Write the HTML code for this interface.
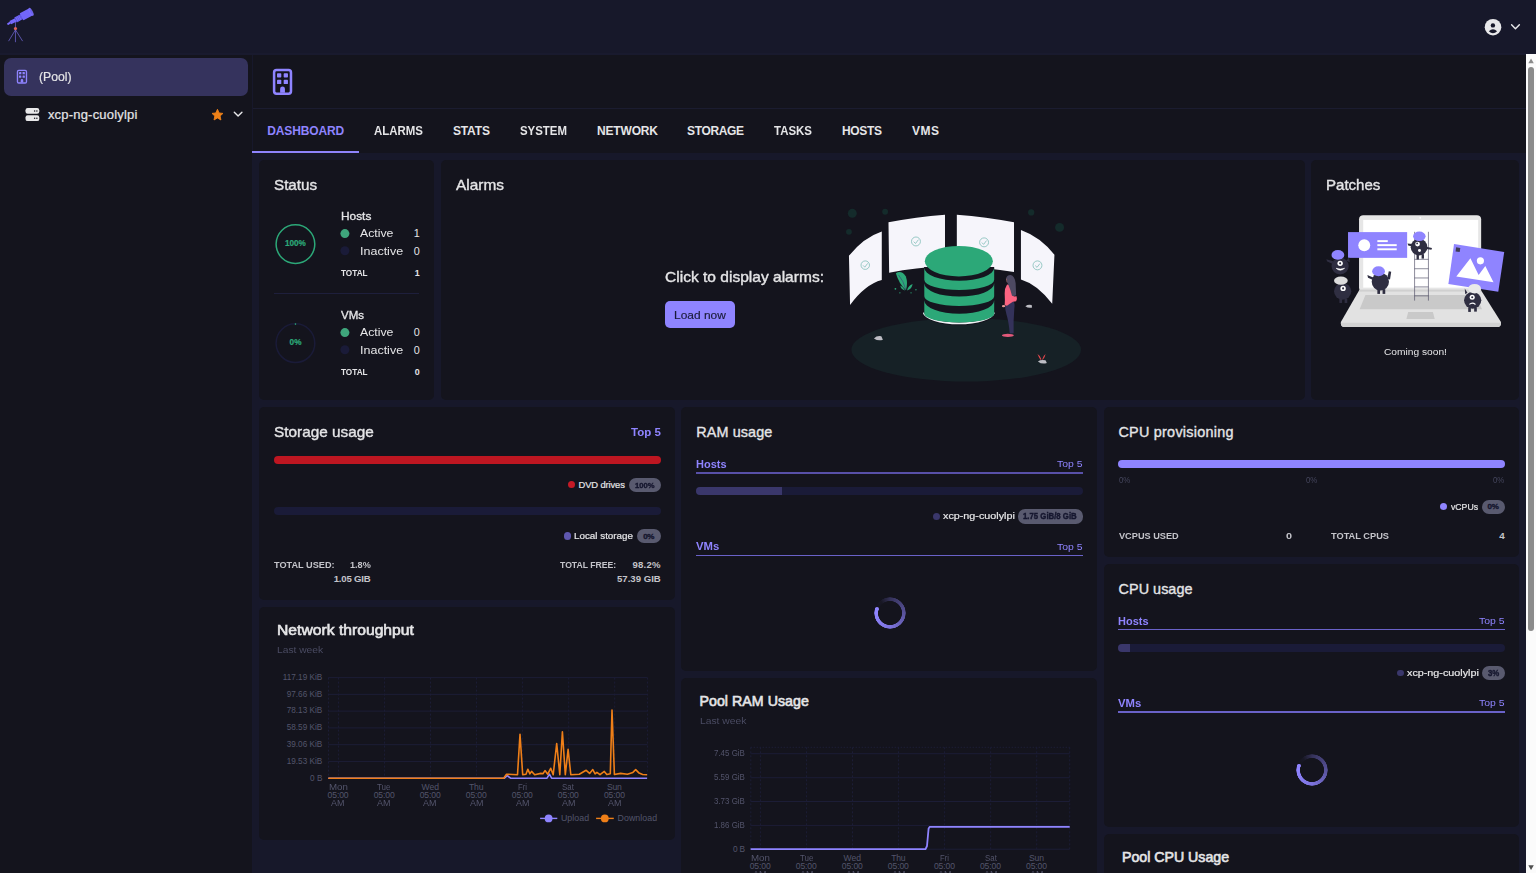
<!DOCTYPE html>
<html lang="en"><head><meta charset="utf-8"><title>XO Lite</title>
<style>
html,body{margin:0;padding:0;}
body{width:1536px;height:873px;overflow:hidden;background:#14141d;font-family:"Liberation Sans", sans-serif;position:relative;}
.b{position:absolute;}
.t{position:absolute;white-space:nowrap;margin:0;transform-origin:0 50%;}
svg{position:absolute;overflow:visible;}
.sp{position:absolute;width:32px;height:32px;border-radius:50%;background:conic-gradient(from 288deg, rgba(143,132,255,0) 0deg, rgba(143,132,255,0.04) 35deg, rgba(143,132,255,0.28) 75deg, rgba(143,132,255,0.55) 160deg, rgba(143,132,255,0.85) 250deg, rgba(143,132,255,1) 340deg, rgba(143,132,255,1) 360deg);-webkit-mask:radial-gradient(circle closest-side, transparent 11.7px, #000 12.3px, #000 15.4px, transparent 16px);mask:radial-gradient(circle closest-side, transparent 11.7px, #000 12.3px, #000 15.4px, transparent 16px);}
.sph{position:absolute;width:3.8px;height:3.8px;border-radius:50%;background:#8f84ff;}
svg text{font-family:"Liberation Sans", sans-serif;}
</style></head><body>
<div class="b" style="left:0px;top:54px;width:1536px;height:819px;background:#14141d;"></div>
<div class="b" style="left:0px;top:0px;width:1536px;height:54.8px;background:#17182a;"></div>
<div class="b" style="left:0px;top:53.2px;width:1536px;height:1.6px;background:#191a2e;"></div>
<div class="b" style="left:252px;top:54.8px;width:1.1px;height:818.2px;background:#17182b;"></div>
<div class="b" style="left:253px;top:108px;width:1273px;height:0.9px;background:#1b1c30;"></div>
<div class="b" style="left:253px;top:153.2px;width:1273px;height:719.8px;background:#17182a;"></div>
<div class="b" style="left:252px;top:150.9px;width:107px;height:2.3px;background:#8f84ff;"></div>
<div class="b" style="left:3.5px;top:57.8px;width:244.8px;height:38.0px;background:#35335d;border-radius:7px;"></div>
<svg style="left:0px;top:0px" width="128" height="73" viewBox="0 0 1531 873">
<g stroke="#7a6fe6" stroke-width="8" stroke-linecap="round" fill="none"><path d="M185 262V500M183 360L105 488M187 360L268 488"/></g>
<g transform="translate(88,290) rotate(-27.7)">
<rect x="0" y="-12" width="45" height="24" rx="6" fill="#7a6cff"/>
<rect x="40" y="-22" width="75" height="44" fill="#7468fa"/>
<rect x="110" y="-33" width="85" height="66" fill="#5f54e6"/>
<g stroke="#8f84ff" stroke-width="6"><path d="M128 -30V30M148 -30V30M168 -30V30"/></g>
<rect x="190" y="-48" width="135" height="96" rx="10" fill="#7266fa"/>
<ellipse cx="322" cy="0" rx="15" ry="50" fill="#6a5ff0" stroke="#8f84ff" stroke-width="5"/>
</g>
<circle cx="185" cy="342" r="19" fill="#e0645a"/>
</svg>

<svg style="left:262px;top:60px" width="44" height="44" viewBox="0 0 873 873">
<rect x="240" y="200" width="335" height="470" rx="48" fill="none" stroke="#8f84ff" stroke-width="50"/>
<g fill="#8f84ff"><rect x="298" y="262" width="85" height="85" rx="14"/><rect x="430" y="262" width="85" height="85" rx="14"/><rect x="298" y="393" width="85" height="85" rx="14"/><rect x="430" y="393" width="85" height="85" rx="14"/>
<path d="M360 648 V572 A47.5 47.5 0 0 1 455 572 V648Z"/></g>
</svg>
<svg style="left:11.2px;top:65.3px" width="23.5" height="23.5" viewBox="0 0 873 873">
<rect x="240" y="200" width="335" height="470" rx="48" fill="none" stroke="#8f84ff" stroke-width="50"/>
<g fill="#8f84ff"><rect x="298" y="262" width="85" height="85" rx="14"/><rect x="430" y="262" width="85" height="85" rx="14"/><rect x="298" y="393" width="85" height="85" rx="14"/><rect x="430" y="393" width="85" height="85" rx="14"/>
<path d="M360 648 V572 A47.5 47.5 0 0 1 455 572 V648Z"/></g>
</svg>
<svg style="left:25px;top:107px" width="16" height="16" viewBox="0 0 16 16">
<rect x="0.5" y="1.1" width="13.8" height="5.7" rx="2.2" fill="#e8e8ea"/>
<rect x="0.5" y="8.3" width="13.8" height="5.8" rx="2.2" fill="#e8e8ea"/>
<g fill="#14141d"><circle cx="9.6" cy="3.95" r="0.75"/><circle cx="11.9" cy="3.95" r="0.75"/><circle cx="9.6" cy="11.2" r="0.75"/><circle cx="11.9" cy="11.2" r="0.75"/></g>
</svg>
<svg style="left:204px;top:100px" width="48" height="28" viewBox="0 0 1497 873">
<path id="star" d="M420 290 L472 405 L590 418 L502 500 L527 622 L420 560 L313 622 L338 500 L250 418 L368 405Z" fill="#ee8118" stroke="#ee8118" stroke-width="28" stroke-linejoin="round"/>
<path d="M945 380 L1063 498 L1183 380" fill="none" stroke="#e8e8ea" stroke-width="44" stroke-linecap="round" stroke-linejoin="round"/>
</svg>

<span class="t " style="left:38.50px;top:69px;font-size:13px;line-height:15px;color:#e5e5e7;transform:scaleX(0.9372);-webkit-text-stroke:0.2px #e5e5e7;">(Pool)</span>
<span class="t " style="left:47.90px;top:107px;font-size:13px;line-height:15px;color:#e5e5e7;letter-spacing:0.200px;-webkit-text-stroke:0.2px #e5e5e7;">xcp-ng-cuolylpi</span>
<svg style="left:1476px;top:12px" width="54" height="30" viewBox="0 0 1536 853">
<circle cx="484" cy="433" r="236" fill="#e8e8ea"/>
<circle cx="481" cy="382" r="62" fill="#17182a"/>
<path d="M365 548 Q483 435 600 548 Q483 660 365 548Z" fill="#17182a"/>
<path d="M1012 362 L1122 478 L1234 362" fill="none" stroke="#e8e8ea" stroke-width="40" stroke-linecap="round" stroke-linejoin="round"/>
</svg>

<span class="t " style="left:267.30px;top:124px;font-size:12px;line-height:14px;color:#8f84ff;letter-spacing:-0.150px;font-weight:700;">DASHBOARD</span>
<span class="t " style="left:374.30px;top:124px;font-size:12px;line-height:14px;color:#e5e5e7;transform:scaleX(0.9527);font-weight:700;">ALARMS</span>
<span class="t " style="left:452.90px;top:124px;font-size:12px;line-height:14px;color:#e5e5e7;letter-spacing:-0.113px;font-weight:700;">STATS</span>
<span class="t " style="left:520.00px;top:124px;font-size:12px;line-height:14px;color:#e5e5e7;transform:scaleX(0.9525);font-weight:700;">SYSTEM</span>
<span class="t " style="left:597.00px;top:124px;font-size:12px;line-height:14px;color:#e5e5e7;letter-spacing:-0.165px;font-weight:700;">NETWORK</span>
<span class="t " style="left:687.00px;top:124px;font-size:12px;line-height:14px;color:#e5e5e7;letter-spacing:-0.354px;font-weight:700;">STORAGE</span>
<span class="t " style="left:774.00px;top:124px;font-size:12px;line-height:14px;color:#e5e5e7;transform:scaleX(0.9553);font-weight:700;">TASKS</span>
<span class="t " style="left:842.00px;top:124px;font-size:12px;line-height:14px;color:#e5e5e7;letter-spacing:-0.334px;font-weight:700;">HOSTS</span>
<span class="t " style="left:912.00px;top:124px;font-size:12px;line-height:14px;color:#e5e5e7;letter-spacing:0.498px;font-weight:700;">VMS</span>
<div class="b" style="left:259.3px;top:160.2px;width:175.0px;height:240.0px;background:#14141d;border-radius:5px;"></div>
<div class="b" style="left:440.9px;top:160.2px;width:863.7px;height:240.0px;background:#14141d;border-radius:5px;"></div>
<div class="b" style="left:1311.3px;top:160.2px;width:207.3px;height:240.0px;background:#14141d;border-radius:5px;"></div>
<div class="b" style="left:259.3px;top:407.3px;width:415.9px;height:192.9px;background:#14141d;border-radius:5px;"></div>
<div class="b" style="left:681.2px;top:407.3px;width:416.1px;height:263.5px;background:#14141d;border-radius:5px;"></div>
<div class="b" style="left:1104.3px;top:407.3px;width:414.3px;height:150.1px;background:#14141d;border-radius:5px;"></div>
<div class="b" style="left:259.3px;top:606.8px;width:415.9px;height:233.2px;background:#14141d;border-radius:5px;"></div>
<div class="b" style="left:681.2px;top:678px;width:416.1px;height:205px;background:#14141d;border-radius:5px;"></div>
<div class="b" style="left:1104.3px;top:564.3px;width:414.3px;height:262.7px;background:#14141d;border-radius:5px;"></div>
<div class="b" style="left:1104.3px;top:834.2px;width:414.3px;height:48.8px;background:#14141d;border-radius:5px;"></div>
<span class="t " style="left:273.80px;top:177px;font-size:14.4px;line-height:16px;color:#e5e5e7;transform:scaleX(1.0558);-webkit-text-stroke:0.35px #e5e5e7;">Status</span>
<svg style="left:265px;top:215px" width="60" height="160" viewBox="0 0 60 160">
<circle cx="30.45" cy="29.1" r="19.35" fill="none" stroke="#2ca878" stroke-width="1.5"/>
<circle cx="30.45" cy="128.2" r="19.35" fill="none" stroke="#1a1b38" stroke-width="1.5"/>
<circle cx="30.45" cy="109.1" r="0.8" fill="#2ca878"/>
</svg>
<svg style="left:330px;top:220px" width="30" height="150" viewBox="0 0 30 150">
<circle cx="14.9" cy="13.6" r="4.5" fill="#3fa67c"/>
<circle cx="14.9" cy="30.7" r="4.5" fill="#1a1b38"/>
<circle cx="14.9" cy="112.6" r="4.5" fill="#3fa67c"/>
<circle cx="14.9" cy="129.7" r="4.5" fill="#1a1b38"/>
</svg>

<span class="t " style="left:284.90px;top:239px;font-size:8.2px;line-height:9px;color:#2ca878;font-weight:700;-webkit-text-stroke:0.2px #2ca878;">100%</span>
<span class="t " style="left:289.40px;top:338px;font-size:8.2px;line-height:9px;color:#2ca878;letter-spacing:0.276px;font-weight:700;-webkit-text-stroke:0.2px #2ca878;">0%</span>
<span class="t " style="left:340.70px;top:210px;font-size:10.8px;line-height:12px;color:#e5e5e7;transform:scaleX(1.0990);-webkit-text-stroke:0.3px #e5e5e7;">Hosts</span>
<span class="t " style="left:359.90px;top:227px;font-size:10.8px;line-height:12px;color:#e5e5e7;transform:scaleX(1.1375);">Active</span>
<span class="t " style="left:359.90px;top:245px;font-size:10.8px;line-height:12px;color:#e5e5e7;transform:scaleX(1.1579);">Inactive</span>
<span class="t " style="left:413.82px;top:227px;font-size:10.8px;line-height:12px;color:#e5e5e7;">1</span>
<span class="t " style="left:413.82px;top:245px;font-size:10.8px;line-height:12px;color:#e5e5e7;">0</span>
<span class="t " style="left:341.00px;top:268px;font-size:8.9px;line-height:10px;color:#e5e5e7;transform:scaleX(0.9259);font-weight:700;">TOTAL</span>
<span class="t " style="left:414.79px;top:268px;font-size:8.9px;line-height:10px;color:#e5e5e7;font-weight:700;">1</span>
<span class="t " style="left:340.70px;top:309px;font-size:10.8px;line-height:12px;color:#e5e5e7;transform:scaleX(1.0651);-webkit-text-stroke:0.3px #e5e5e7;">VMs</span>
<span class="t " style="left:359.90px;top:326px;font-size:10.8px;line-height:12px;color:#e5e5e7;transform:scaleX(1.1375);">Active</span>
<span class="t " style="left:359.90px;top:344px;font-size:10.8px;line-height:12px;color:#e5e5e7;transform:scaleX(1.1579);">Inactive</span>
<span class="t " style="left:413.82px;top:326px;font-size:10.8px;line-height:12px;color:#e5e5e7;">0</span>
<span class="t " style="left:413.82px;top:344px;font-size:10.8px;line-height:12px;color:#e5e5e7;">0</span>
<span class="t " style="left:341.00px;top:367px;font-size:8.9px;line-height:10px;color:#e5e5e7;transform:scaleX(0.9259);font-weight:700;">TOTAL</span>
<span class="t " style="left:414.79px;top:367px;font-size:8.9px;line-height:10px;color:#e5e5e7;font-weight:700;">0</span>
<div class="b" style="left:273.7px;top:293px;width:145.8px;height:1px;background:#1e1f3c;"></div>
<span class="t " style="left:456.00px;top:177px;font-size:14.4px;line-height:16px;color:#e5e5e7;transform:scaleX(1.0706);-webkit-text-stroke:0.35px #e5e5e7;">Alarms</span>
<span class="t " style="left:665.00px;top:269px;font-size:14.4px;line-height:16px;color:#e5e5e7;transform:scaleX(1.0805);-webkit-text-stroke:0.35px #e5e5e7;">Click to display alarms:</span>
<div class="b" style="left:664.6px;top:300.8px;width:70.6px;height:27.4px;background:#8f84ff;border-radius:5px;"></div>
<span class="t " style="left:674.00px;top:309px;font-size:11.2px;line-height:12px;color:#1a1b38;transform:scaleX(1.0678);-webkit-text-stroke:0.15px #1a1b38;">Load now</span>
<svg style="left:840px;top:195px" width="256" height="195" viewBox="0 0 1146 873">
<g fill="#142b2b"><circle cx="55" cy="82" r="20"/><circle cx="202" cy="75" r="13"/><circle cx="40" cy="165" r="13"/><circle cx="856" cy="78" r="14"/><circle cx="983" cy="145" r="20"/></g>
<ellipse cx="565" cy="693" rx="514" ry="142" fill="#162126"/>
<g fill="#f6f5fb">
<path d="M40 272 Q105 190 187 163 L187 380 Q112 400 45 492Z"/>
<path d="M217 122 Q340 98 470 88 L470 318 Q340 325 220 348Z"/>
<path d="M523 88 Q655 98 779 122 L779 345 Q655 325 523 318Z"/>
<path d="M810 157 Q897 188 960 268 L950 487 Q884 400 810 378Z"/>
</g>
<g fill="none" stroke="#7dbcb6" stroke-width="3.5">
<circle cx="113" cy="314" r="19"/><path d="M103 315 l8 8 l13 -17"/>
<circle cx="340" cy="208" r="20"/><path d="M330 209 l8 8 l13 -17"/>
<circle cx="645" cy="212" r="20"/><path d="M635 213 l8 8 l13 -17"/>
<circle cx="884" cy="315" r="20"/><path d="M874 316 l8 8 l13 -17"/>
</g>
<!-- cylinder -->
<g transform="translate(335.8,201.5) scale(0.4615)">
<path d="M88 262 L88 715 A339 112 0 0 0 768 715 L768 262Z" fill="#15151f"/>
<path d="M76 708 A350 118 0 0 0 774 708 L768 700 A339 100 0 0 1 88 700Z" fill="#f0f0f4"/>
<g fill="#2ca878">
<path d="M90 270 A339 125 0 0 0 768 270 L768 385 A339 100 0 0 1 90 385Z"/>
<path d="M90 420 A339 128 0 0 0 768 420 L768 545 A339 95 0 0 1 90 545Z"/>
<path d="M90 585 A339 130 0 0 0 768 585 L768 715 A339 85 0 0 1 90 715Z"/>
<ellipse cx="425" cy="205" rx="330" ry="148"/>
</g>
</g>
<!-- plant -->
<path d="M250 350 Q275 335 295 365 Q305 395 295 425 Q265 400 250 350Z" fill="#2ca878"/>
<path d="M300 428 Q305 405 325 398 Q322 420 300 428Z" fill="#2ca878"/>
<path d="M292 428 Q280 410 270 405 Q272 422 292 428Z" fill="#2ca878"/>
<path d="M262 358 Q285 385 295 425" stroke="#3b4a78" stroke-width="3" fill="none"/>
<g fill="#2ca878"><circle cx="248" cy="420" r="4"/><circle cx="268" cy="438" r="3"/><circle cx="318" cy="438" r="3"/><circle cx="340" cy="424" r="3"/></g>
<!-- woman -->
<g transform="translate(671.55,313.4) scale(0.41)">
<path d="M165 450 Q200 420 255 395 Q275 420 265 480 Q255 600 258 745 L215 748 Q205 620 180 540 Q165 490 165 450Z" fill="#34325a"/>
<path d="M185 215 Q215 205 235 260 Q245 310 260 345 L290 340 Q300 365 285 395 L250 400 Q215 420 185 445 L160 440 Q165 380 160 310 Q160 250 185 215Z" fill="#fb6381"/>
<path d="M175 150 L190 135 L198 190 L182 188Z" fill="#9a6a6a"/>
<path d="M175 150 Q180 110 225 108 Q270 115 280 200 L285 330 Q265 345 240 335 Q225 270 200 215 Q182 190 185 150Z" fill="#4d4962"/>
<ellipse cx="148" cy="450" rx="18" ry="12" fill="#e79a96"/>
<ellipse cx="195" cy="768" rx="65" ry="18" fill="#e2597a"/>
</g>
<!-- rocks -->
<path d="M152 642 Q165 628 185 632 L192 648 Q170 655 152 642Z" fill="#bdbdc4"/>
<path d="M830 498 Q842 488 858 493 L860 504 Q842 508 830 498Z" fill="#bdbdc4"/>
<path d="M886 745 Q900 735 920 740 L926 752 Q904 760 886 745Z" fill="#bdbdc4"/>
<path d="M897 738 Q888 722 884 712 Q898 720 902 736Z M905 736 Q910 720 920 712 Q918 728 908 738Z" fill="#e5484d"/>
</svg>

<span class="t " style="left:1326.20px;top:177px;font-size:14.4px;line-height:16px;color:#e5e5e7;transform:scaleX(1.0459);-webkit-text-stroke:0.35px #e5e5e7;">Patches</span>
<svg style="left:1320px;top:205px" width="192" height="130" viewBox="0 0 1289 873">
<path d="M262 575 L1082 575 L1215 785 Q1220 820 1185 820 L170 820 Q135 820 140 785Z" fill="#e2e2e2"/>
<path d="M140 790 L1215 790 Q1218 820 1185 820 L170 820 Q137 820 140 790Z" fill="#d2d2d2"/>
<rect x="262" y="68" width="820" height="515" rx="28" fill="#e6e6e6"/>
<rect x="290" y="100" width="772" height="455" fill="#ffffff"/>
<rect x="262" y="568" width="820" height="14" fill="#d0d0d0"/>
<circle cx="673" cy="86" r="6" fill="#fff"/>
<path d="M305 605 L1045 605 L1088 700 L266 700Z" fill="#c9c9c9"/>
<path d="M592 718 L758 718 L770 765 L580 765Z" fill="#c9c9c9"/>
<!-- left card -->
<rect x="188" y="182" width="397" height="173" fill="#8f84ff"/>
<circle cx="297" cy="270" r="40" fill="#fff"/>
<g fill="#fff"><rect x="385" y="236" width="70" height="13"/><rect x="385" y="263" width="130" height="13"/><rect x="385" y="291" width="130" height="13"/></g>
<!-- ladder -->
<g stroke="#3f3d56" stroke-width="4" fill="none"><path d="M635 180V642M728 180V642M635 365H728M635 428H728M635 490H728M635 550H728M635 610H728"/></g>
<!-- monster on ladder -->
<g fill="#2f2e41"><ellipse cx="665" cy="283" rx="56" ry="56"/><path d="M588 258 L620 262 L620 278 L592 272Z"/><path d="M712 280 L752 288 L748 300 L712 296Z"/><rect x="648" y="330" width="16" height="36"/><rect x="682" y="330" width="16" height="30"/></g>
<ellipse cx="667" cy="210" rx="42" ry="32" fill="#8f84ff"/>
<circle cx="655" cy="262" r="16" fill="#fff"/><circle cx="652" cy="258" r="6" fill="#2f2e41"/><circle cx="668" cy="306" r="10" fill="#fff"/>
<!-- monster middle -->
<g fill="#2f2e41"><ellipse cx="405" cy="515" rx="58" ry="60"/><path d="M318 470 L365 490 L360 505 L322 488Z"/><path d="M450 495 L462 445 L478 448 L470 500Z"/><rect x="385" y="565" width="18" height="32"/><rect x="420" y="565" width="18" height="32"/></g>
<ellipse cx="393" cy="445" rx="43" ry="34" fill="#8f84ff"/>
<!-- right card -->
<path d="M900 262 L1237 315 L1197 583 L862 530Z" fill="#8f84ff"/>
<path d="M914 284 L942 288 L938 316 L910 312Z" fill="#3f3d56"/>
<path d="M915 480 L1010 358 L1065 470 L1110 410 L1165 518Z" fill="#fff"/>
<circle cx="1077" cy="375" r="24" fill="#fff"/>
<!-- monsters left -->
<g fill="#2f2e41"><ellipse cx="152" cy="580" rx="58" ry="56"/><rect x="130" y="628" width="18" height="30"/><rect x="165" y="628" width="18" height="30"/><ellipse cx="135" cy="410" rx="58" ry="56"/><path d="M42 365 L88 378 L82 395 L48 380Z"/><path d="M178 375 L195 350 L200 385Z"/></g>
<ellipse cx="140" cy="508" rx="46" ry="28" fill="#dcdcdc"/>
<ellipse cx="120" cy="335" rx="43" ry="33" fill="#8f84ff"/>
<circle cx="135" cy="392" r="18" fill="#fff"/><circle cx="135" cy="392" r="7" fill="#2f2e41"/>
<path d="M108 425 Q135 450 165 425 Q135 436 108 425Z" fill="#fff" stroke="#fff" stroke-width="4"/>
<circle cx="155" cy="560" r="18" fill="#fff"/><circle cx="155" cy="560" r="7" fill="#2f2e41"/>
<!-- monster right -->
<g fill="#2f2e41"><ellipse cx="1025" cy="640" rx="58" ry="56"/><rect x="995" y="688" width="18" height="30"/><rect x="1035" y="688" width="18" height="28"/><path d="M972 560 L990 590 L975 600Z"/></g>
<ellipse cx="1038" cy="562" rx="43" ry="32" fill="#e9e9e9"/>
<circle cx="1022" cy="620" r="17" fill="#fff"/><circle cx="1022" cy="620" r="7" fill="#2f2e41"/>
<path d="M1003 668 Q1022 650 1044 668" stroke="#fff" stroke-width="7" fill="none"/>
</svg>

<span class="t " style="left:1384.30px;top:346px;font-size:9.6px;line-height:11px;color:#e5e5e7;transform:scaleX(1.0629);">Coming soon!</span>
<span class="t " style="left:273.70px;top:424px;font-size:14.4px;line-height:16px;color:#e5e5e7;transform:scaleX(1.0666);-webkit-text-stroke:0.35px #e5e5e7;">Storage usage</span>
<span class="t " style="left:630.70px;top:426px;font-size:10.8px;line-height:12px;color:#8f84ff;transform:scaleX(1.0658);font-weight:700;">Top 5</span>
<div class="b" style="left:273.5px;top:455.6px;width:387.25px;height:8.0px;background:#be1621;border-radius:4px;"></div>
<div class="b" style="left:568.2px;top:481.2px;width:7.3px;height:7.3px;background:#c41a26;border-radius:4px;"></div>
<span class="t " style="left:578.50px;top:479px;font-size:9.4px;line-height:11px;color:#e5e5e7;letter-spacing:-0.115px;-webkit-text-stroke:0.2px #e5e5e7;">DVD drives</span>
<div class="b" style="left:629.1px;top:478px;width:31.65px;height:14px;background:#595a6f;border-radius:7px;"></div>
<span class="t " style="left:634.90px;top:481px;font-size:8px;line-height:9px;color:#16172f;transform:scaleX(0.9530);font-weight:700;-webkit-text-stroke:0.4px #16172f;">100%</span>
<div class="b" style="left:273.7px;top:506.9px;width:387.05px;height:8.0px;background:#1a1b38;border-radius:4px;"></div>
<div class="b" style="left:564.1px;top:532.4px;width:7.3px;height:7.3px;background:#5f58b0;border-radius:4px;"></div>
<span class="t " style="left:574.10px;top:530px;font-size:9.4px;line-height:11px;color:#e5e5e7;transform:scaleX(1.0484);-webkit-text-stroke:0.2px #e5e5e7;">Local storage</span>
<div class="b" style="left:637.4px;top:528.9px;width:23.35px;height:14.0px;background:#595a6f;border-radius:7px;"></div>
<span class="t " style="left:643.20px;top:532px;font-size:8px;line-height:9px;color:#16172f;letter-spacing:-0.363px;font-weight:700;-webkit-text-stroke:0.4px #16172f;">0%</span>
<span class="t " style="left:273.70px;top:559px;font-size:9.6px;line-height:11px;color:#c4c4ca;transform:scaleX(0.9553);font-weight:700;">TOTAL USED:</span>
<span class="t " style="left:349.70px;top:559px;font-size:9.6px;line-height:11px;color:#c4c4ca;transform:scaleX(0.9514);font-weight:700;">1.8%</span>
<span class="t " style="left:333.70px;top:573px;font-size:9.6px;line-height:11px;color:#c4c4ca;letter-spacing:-0.203px;font-weight:700;">1.05 GIB</span>
<span class="t " style="left:560.40px;top:559px;font-size:9.6px;line-height:11px;color:#c4c4ca;transform:scaleX(0.9020);font-weight:700;">TOTAL FREE:</span>
<span class="t " style="left:632.40px;top:559px;font-size:9.6px;line-height:11px;color:#c4c4ca;letter-spacing:0.241px;font-weight:700;">98.2%</span>
<span class="t " style="left:617.00px;top:573px;font-size:9.6px;line-height:11px;color:#c4c4ca;font-weight:700;">57.39 GIB</span>
<span class="t " style="left:277.30px;top:622px;font-size:14.2px;line-height:16px;color:#e5e5e7;transform:scaleX(1.1056);-webkit-text-stroke:0.6px #e5e5e7;">Network throughput</span>
<span class="t " style="left:277.30px;top:644px;font-size:9.6px;line-height:11px;color:#4a4b62;transform:scaleX(1.0684);">Last week</span>
<svg style="left:0;top:0" width="1536" height="873" viewBox="0 0 1536 873"><g stroke="#1c1d36" stroke-width="1" fill="none"><path d="M328.3 677.6H647.4"/><path d="M328.3 694.37H647.4"/><path d="M328.3 711.14H647.4"/><path d="M328.3 727.9100000000001H647.4"/><path d="M328.3 744.6800000000001H647.4"/><path d="M328.3 761.45H647.4"/><path d="M328.3 778.22H647.4"/><path d="M328.5 677.6V778.22" stroke-dasharray="2 2"/><path d="M338.4 677.6V778.22" stroke-dasharray="2 2"/><path d="M384.45 677.6V778.22" stroke-dasharray="2 2"/><path d="M430.5 677.6V778.22" stroke-dasharray="2 2"/><path d="M476.54999999999995 677.6V778.22" stroke-dasharray="2 2"/><path d="M522.5999999999999 677.6V778.22" stroke-dasharray="2 2"/><path d="M568.65 677.6V778.22" stroke-dasharray="2 2"/><path d="M614.6999999999999 677.6V778.22" stroke-dasharray="2 2"/><path d="M647.4 677.6V778.22" stroke-dasharray="2 2"/></g><path d="M328.3 778.2H490" stroke="#8f84ff" stroke-width="1.6" fill="none"/><path d="M490.0 778.2 L504.4 778.2 L507.2 775.6 L510.6 778.2 L547.0 778.2 L549.4 774.2 L551.6 778.2 L647.1 778.2" stroke="#8f84ff" stroke-width="1.6" fill="none" stroke-linejoin="round"/><path d="M328.3 778.2H490" stroke="#ef7f18" stroke-width="1.6" fill="none"/><path d="M490.0 778.2 L503.7 778.2 L506.5 774.2 L517.5 774.7 L520.0 734.3 L522.7 774.7 L526.0 774.2 L527.8 769.2 L529.9 773.8 L531.6 771.4 L534.7 774.7 L540.9 773.4 L542.9 773.8 L545.0 770.6 L547.7 774.2 L550.7 768.3 L553.2 774.7 L556.7 743.5 L559.8 774.7 L562.4 731.8 L565.3 774.7 L568.1 749.4 L570.8 774.7 L579.3 774.2 L584.8 771.0 L586.2 770.3 L589.6 773.4 L592.8 769.6 L595.1 773.8 L596.9 772.4 L600.0 774.7 L604.3 771.4 L606.8 774.5 L610.3 773.8 L612.0 710.1 L614.4 774.5 L620.6 773.4 L627.4 774.2 L632.9 772.4 L635.7 769.6 L639.1 773.1 L642.6 774.5 L647.1 774.7" stroke="#ef7f18" stroke-width="1.6" fill="none" stroke-linejoin="round"/><path d="M540.1 818.4H557.3" stroke="#8f84ff" stroke-width="1.4"/><circle cx="548.6" cy="818.4" r="3.9" fill="#8f84ff"/><path d="M596.1 818.4H613.8" stroke="#ef7f18" stroke-width="1.4"/><circle cx="604.8" cy="818.4" r="3.9" fill="#ef7f18"/></svg>
<span class="t " style="left:282.75px;top:673px;font-size:8.2px;line-height:9px;color:#53546b;">117.19 KiB</span>
<span class="t " style="left:286.72px;top:690px;font-size:8.2px;line-height:9px;color:#53546b;">97.66 KiB</span>
<span class="t " style="left:286.72px;top:706px;font-size:8.2px;line-height:9px;color:#53546b;">78.13 KiB</span>
<span class="t " style="left:286.72px;top:723px;font-size:8.2px;line-height:9px;color:#53546b;">58.59 KiB</span>
<span class="t " style="left:286.72px;top:740px;font-size:8.2px;line-height:9px;color:#53546b;">39.06 KiB</span>
<span class="t " style="left:286.72px;top:757px;font-size:8.2px;line-height:9px;color:#53546b;">19.53 KiB</span>
<span class="t " style="left:310.12px;top:774px;font-size:8.2px;line-height:9px;color:#53546b;">0 B</span>
<span class="t " style="left:328.65px;top:782px;font-size:8.6px;line-height:10px;color:#53546b;transform:scaleX(1.1309);">Mon</span>
<span class="t " style="left:327.60px;top:790px;font-size:8.6px;line-height:10px;color:#53546b;letter-spacing:-0.118px;">05:00</span>
<span class="t " style="left:331.35px;top:798px;font-size:8.6px;line-height:10px;color:#53546b;transform:scaleX(1.0431);">AM</span>
<span class="t " style="left:377.40px;top:782px;font-size:8.6px;line-height:10px;color:#53546b;transform:scaleX(0.9280);">Tue</span>
<span class="t " style="left:373.65px;top:790px;font-size:8.6px;line-height:10px;color:#53546b;letter-spacing:-0.118px;">05:00</span>
<span class="t " style="left:377.40px;top:798px;font-size:8.6px;line-height:10px;color:#53546b;transform:scaleX(1.0431);">AM</span>
<span class="t " style="left:421.45px;top:782px;font-size:8.6px;line-height:10px;color:#53546b;letter-spacing:-0.012px;">Wed</span>
<span class="t " style="left:419.70px;top:790px;font-size:8.6px;line-height:10px;color:#53546b;letter-spacing:-0.118px;">05:00</span>
<span class="t " style="left:423.45px;top:798px;font-size:8.6px;line-height:10px;color:#53546b;transform:scaleX(1.0431);">AM</span>
<span class="t " style="left:469.05px;top:782px;font-size:8.6px;line-height:10px;color:#53546b;letter-spacing:-0.223px;">Thu</span>
<span class="t " style="left:465.75px;top:790px;font-size:8.6px;line-height:10px;color:#53546b;letter-spacing:-0.118px;">05:00</span>
<span class="t " style="left:469.50px;top:798px;font-size:8.6px;line-height:10px;color:#53546b;transform:scaleX(1.0431);">AM</span>
<span class="t " style="left:517.75px;top:782px;font-size:8.6px;line-height:10px;color:#53546b;transform:scaleX(0.8980);">Fri</span>
<span class="t " style="left:511.80px;top:790px;font-size:8.6px;line-height:10px;color:#53546b;letter-spacing:-0.118px;">05:00</span>
<span class="t " style="left:515.55px;top:798px;font-size:8.6px;line-height:10px;color:#53546b;transform:scaleX(1.0431);">AM</span>
<span class="t " style="left:562.40px;top:782px;font-size:8.6px;line-height:10px;color:#53546b;transform:scaleX(0.9171);">Sat</span>
<span class="t " style="left:557.85px;top:790px;font-size:8.6px;line-height:10px;color:#53546b;letter-spacing:-0.118px;">05:00</span>
<span class="t " style="left:561.60px;top:798px;font-size:8.6px;line-height:10px;color:#53546b;transform:scaleX(1.0431);">AM</span>
<span class="t " style="left:606.95px;top:782px;font-size:8.6px;line-height:10px;color:#53546b;letter-spacing:-0.212px;">Sun</span>
<span class="t " style="left:603.90px;top:790px;font-size:8.6px;line-height:10px;color:#53546b;letter-spacing:-0.118px;">05:00</span>
<span class="t " style="left:607.65px;top:798px;font-size:8.6px;line-height:10px;color:#53546b;transform:scaleX(1.0431);">AM</span>
<span class="t " style="left:560.90px;top:813px;font-size:8.8px;line-height:10px;color:#53546b;letter-spacing:0.054px;">Upload</span>
<span class="t " style="left:617.50px;top:813px;font-size:8.8px;line-height:10px;color:#53546b;letter-spacing:0.069px;">Download</span>
<svg style="left:0;top:0" width="1536" height="873" viewBox="0 0 1536 873"><g stroke="#1c1d36" stroke-width="1" fill="none"><path d="M750.6 753.7H1069.7"/><path d="M750.6 777.7H1069.7"/><path d="M750.6 801.5H1069.7"/><path d="M750.6 825.4H1069.7"/><path d="M750.6 849.2H1069.7"/><path d="M750.6 747.3H1069.7" stroke-dasharray="1.5 1.5"/><path d="M750.8 747.3V849.2" stroke-dasharray="2 2"/><path d="M760.4 747.3V849.2" stroke-dasharray="2 2"/><path d="M806.4499999999999 747.3V849.2" stroke-dasharray="2 2"/><path d="M852.5 747.3V849.2" stroke-dasharray="2 2"/><path d="M898.55 747.3V849.2" stroke-dasharray="2 2"/><path d="M944.5999999999999 747.3V849.2" stroke-dasharray="2 2"/><path d="M990.65 747.3V849.2" stroke-dasharray="2 2"/><path d="M1036.6999999999998 747.3V849.2" stroke-dasharray="2 2"/><path d="M1069.7 747.3V849.2" stroke-dasharray="2 2"/></g><path d="M750.6 849.2H925.5L927 846L928.6 828.5L929.8 826.8H1069.7" stroke="#8f84ff" stroke-width="1.8" fill="none" stroke-linejoin="round"/></svg>
<span class="t " style="left:714.30px;top:748px;font-size:8.3px;line-height:10px;color:#53546b;transform:scaleX(0.9564);">7.45 GiB</span>
<span class="t " style="left:714.30px;top:772px;font-size:8.3px;line-height:10px;color:#53546b;transform:scaleX(0.9564);">5.59 GiB</span>
<span class="t " style="left:714.30px;top:796px;font-size:8.3px;line-height:10px;color:#53546b;transform:scaleX(0.9564);">3.73 GiB</span>
<span class="t " style="left:714.30px;top:820px;font-size:8.3px;line-height:10px;color:#53546b;transform:scaleX(0.9564);">1.86 GiB</span>
<span class="t " style="left:733.02px;top:844px;font-size:8.3px;line-height:10px;color:#53546b;letter-spacing:-0.200px;">0 B</span>
<span class="t " style="left:750.75px;top:853px;font-size:8.6px;line-height:10px;color:#53546b;transform:scaleX(1.1309);">Mon</span>
<span class="t " style="left:749.70px;top:861px;font-size:8.6px;line-height:10px;color:#53546b;letter-spacing:-0.118px;">05:00</span>
<span class="t " style="left:753.45px;top:869px;font-size:8.6px;line-height:10px;color:#53546b;transform:scaleX(1.0431);">AM</span>
<span class="t " style="left:799.50px;top:853px;font-size:8.6px;line-height:10px;color:#53546b;transform:scaleX(0.9280);">Tue</span>
<span class="t " style="left:795.75px;top:861px;font-size:8.6px;line-height:10px;color:#53546b;letter-spacing:-0.118px;">05:00</span>
<span class="t " style="left:799.50px;top:869px;font-size:8.6px;line-height:10px;color:#53546b;transform:scaleX(1.0431);">AM</span>
<span class="t " style="left:843.55px;top:853px;font-size:8.6px;line-height:10px;color:#53546b;letter-spacing:-0.012px;">Wed</span>
<span class="t " style="left:841.80px;top:861px;font-size:8.6px;line-height:10px;color:#53546b;letter-spacing:-0.118px;">05:00</span>
<span class="t " style="left:845.55px;top:869px;font-size:8.6px;line-height:10px;color:#53546b;transform:scaleX(1.0431);">AM</span>
<span class="t " style="left:891.15px;top:853px;font-size:8.6px;line-height:10px;color:#53546b;letter-spacing:-0.223px;">Thu</span>
<span class="t " style="left:887.85px;top:861px;font-size:8.6px;line-height:10px;color:#53546b;letter-spacing:-0.118px;">05:00</span>
<span class="t " style="left:891.60px;top:869px;font-size:8.6px;line-height:10px;color:#53546b;transform:scaleX(1.0431);">AM</span>
<span class="t " style="left:939.85px;top:853px;font-size:8.6px;line-height:10px;color:#53546b;transform:scaleX(0.8980);">Fri</span>
<span class="t " style="left:933.90px;top:861px;font-size:8.6px;line-height:10px;color:#53546b;letter-spacing:-0.118px;">05:00</span>
<span class="t " style="left:937.65px;top:869px;font-size:8.6px;line-height:10px;color:#53546b;transform:scaleX(1.0431);">AM</span>
<span class="t " style="left:984.50px;top:853px;font-size:8.6px;line-height:10px;color:#53546b;transform:scaleX(0.9171);">Sat</span>
<span class="t " style="left:979.95px;top:861px;font-size:8.6px;line-height:10px;color:#53546b;letter-spacing:-0.118px;">05:00</span>
<span class="t " style="left:983.70px;top:869px;font-size:8.6px;line-height:10px;color:#53546b;transform:scaleX(1.0431);">AM</span>
<span class="t " style="left:1029.05px;top:853px;font-size:8.6px;line-height:10px;color:#53546b;letter-spacing:-0.212px;">Sun</span>
<span class="t " style="left:1026.00px;top:861px;font-size:8.6px;line-height:10px;color:#53546b;letter-spacing:-0.118px;">05:00</span>
<span class="t " style="left:1029.75px;top:869px;font-size:8.6px;line-height:10px;color:#53546b;transform:scaleX(1.0431);">AM</span>
<span class="t " style="left:696.20px;top:424px;font-size:14.4px;line-height:16px;color:#e5e5e7;letter-spacing:0.118px;-webkit-text-stroke:0.35px #e5e5e7;">RAM usage</span>
<span class="t " style="left:696.20px;top:459px;font-size:10.4px;line-height:11px;color:#8f84ff;transform:scaleX(1.0592);font-weight:700;">Hosts</span>
<span class="t " style="left:1057.30px;top:458px;font-size:9.8px;line-height:11px;color:#8f84ff;transform:scaleX(1.0649);">Top 5</span>
<div class="b" style="left:696px;top:472.3px;width:387px;height:1.4px;background:#5850a8;"></div>
<div class="b" style="left:696px;top:487.1px;width:387px;height:7.8px;background:#1a1b38;border-radius:4px;"></div>
<div class="b" style="left:696px;top:487.1px;width:85.5px;height:7.8px;background:#3a376b;border-radius:4px 0 0 4px;"></div>
<div class="b" style="left:932.9px;top:512.9px;width:6.9px;height:6.9px;background:#3a376b;border-radius:4px;"></div>
<span class="t " style="left:943.10px;top:510px;font-size:9.6px;line-height:11px;color:#e5e5e7;transform:scaleX(1.1222);-webkit-text-stroke:0.2px #e5e5e7;">xcp-ng-cuolylpi</span>
<div class="b" style="left:1017.5px;top:509.4px;width:65.5px;height:14.2px;background:#595a6f;border-radius:7.1px;"></div>
<span class="t " style="left:1023.40px;top:512px;font-size:8.2px;line-height:9px;color:#16172f;transform:scaleX(0.9515);font-weight:700;-webkit-text-stroke:0.4px #16172f;">1.75 GiB/8 GiB</span>
<span class="t " style="left:696.20px;top:541px;font-size:10.4px;line-height:11px;color:#8f84ff;transform:scaleX(1.0885);font-weight:700;">VMs</span>
<span class="t " style="left:1057.30px;top:541px;font-size:9.8px;line-height:11px;color:#8f84ff;transform:scaleX(1.0649);">Top 5</span>
<div class="b" style="left:696px;top:554.7px;width:387px;height:1.4px;background:#6a62c8;"></div>
<div class="sp" style="left:873.7px;top:597.1px"></div><div class="sph" style="left:875px;top:607.2px"></div>
<div class="sp" style="left:1295.5px;top:753.5px"></div><div class="sph" style="left:1296.8px;top:763.6px"></div>

<span class="t " style="left:699.50px;top:693px;font-size:14.2px;line-height:16px;color:#e5e5e7;letter-spacing:0.039px;-webkit-text-stroke:0.6px #e5e5e7;">Pool RAM Usage</span>
<span class="t " style="left:699.50px;top:715px;font-size:9.6px;line-height:11px;color:#4a4b62;transform:scaleX(1.0731);">Last week</span>
<span class="t " style="left:1118.40px;top:424px;font-size:14.4px;line-height:16px;color:#e5e5e7;letter-spacing:0.259px;-webkit-text-stroke:0.35px #e5e5e7;">CPU provisioning</span>
<div class="b" style="left:1118.2px;top:459.6px;width:386.7px;height:8.2px;background:#8f84ff;border-radius:4px;"></div>
<span class="t " style="left:1118.60px;top:475px;font-size:8.8px;line-height:10px;color:#44455c;transform:scaleX(0.8935);">0%</span>
<span class="t " style="left:1305.60px;top:475px;font-size:8.8px;line-height:10px;color:#44455c;transform:scaleX(0.8935);">0%</span>
<span class="t " style="left:1493.40px;top:475px;font-size:8.8px;line-height:10px;color:#44455c;transform:scaleX(0.8935);">0%</span>
<div class="b" style="left:1440.3px;top:503.2px;width:6.9px;height:6.9px;background:#8f84ff;border-radius:4px;"></div>
<span class="t " style="left:1450.80px;top:501px;font-size:9.4px;line-height:11px;color:#e5e5e7;transform:scaleX(0.9270);-webkit-text-stroke:0.2px #e5e5e7;">vCPUs</span>
<div class="b" style="left:1481.5px;top:500px;width:23.4px;height:14px;background:#595a6f;border-radius:7px;"></div>
<span class="t " style="left:1487.40px;top:502px;font-size:8px;line-height:9px;color:#16172f;letter-spacing:-0.062px;font-weight:700;-webkit-text-stroke:0.4px #16172f;">0%</span>
<span class="t " style="left:1118.60px;top:530px;font-size:9.8px;line-height:11px;color:#c4c4ca;transform:scaleX(0.9371);font-weight:700;">VCPUS USED</span>
<span class="t " style="left:1286.00px;top:530px;font-size:9.8px;line-height:11px;color:#c4c4ca;transform:scaleX(1.1065);font-weight:700;">0</span>
<span class="t " style="left:1331.00px;top:530px;font-size:9.8px;line-height:11px;color:#c4c4ca;transform:scaleX(0.9426);font-weight:700;">TOTAL CPUS</span>
<span class="t " style="left:1499.28px;top:530px;font-size:9.8px;line-height:11px;color:#c4c4ca;font-weight:700;">4</span>
<span class="t " style="left:1118.60px;top:581px;font-size:14.4px;line-height:16px;color:#e5e5e7;letter-spacing:0.031px;-webkit-text-stroke:0.35px #e5e5e7;">CPU usage</span>
<span class="t " style="left:1118.40px;top:616px;font-size:10.4px;line-height:11px;color:#8f84ff;transform:scaleX(1.0592);font-weight:700;">Hosts</span>
<span class="t " style="left:1479.20px;top:615px;font-size:9.8px;line-height:11px;color:#8f84ff;transform:scaleX(1.0649);">Top 5</span>
<div class="b" style="left:1118.2px;top:629.0px;width:386.7px;height:1.4px;background:#6a62c8;"></div>
<div class="b" style="left:1118.2px;top:643.8px;width:386.7px;height:7.8px;background:#1a1b38;border-radius:4px;"></div>
<div class="b" style="left:1118.2px;top:643.8px;width:11.55px;height:7.8px;background:#3a376b;border-radius:4px 0 0 4px;"></div>
<div class="b" style="left:1396.8px;top:669.6px;width:6.9px;height:6.9px;background:#3a376b;border-radius:4px;"></div>
<span class="t " style="left:1407.00px;top:667px;font-size:9.6px;line-height:11px;color:#e5e5e7;transform:scaleX(1.1222);-webkit-text-stroke:0.2px #e5e5e7;">xcp-ng-cuolylpi</span>
<div class="b" style="left:1482px;top:666.1px;width:22.9px;height:14.2px;background:#595a6f;border-radius:7.1px;"></div>
<span class="t " style="left:1487.80px;top:669px;font-size:8.2px;line-height:9px;color:#16172f;transform:scaleX(0.9560);font-weight:700;-webkit-text-stroke:0.4px #16172f;">3%</span>
<span class="t " style="left:1118.40px;top:698px;font-size:10.4px;line-height:11px;color:#8f84ff;transform:scaleX(1.0885);font-weight:700;">VMs</span>
<span class="t " style="left:1479.20px;top:697px;font-size:9.8px;line-height:11px;color:#8f84ff;transform:scaleX(1.0649);">Top 5</span>
<div class="b" style="left:1118.2px;top:711.4px;width:386.7px;height:1.4px;background:#6a62c8;"></div>
<span class="t " style="left:1122.00px;top:849px;font-size:14.2px;line-height:16px;color:#e5e5e7;letter-spacing:-0.017px;-webkit-text-stroke:0.6px #e5e5e7;">Pool CPU Usage</span>
<div class="b" style="left:1525.8px;top:54px;width:10.2px;height:819px;background:#fbfbfb;"></div>
<div class="b" style="left:1528px;top:66.8px;width:6.1px;height:564.5px;background:#8b8b8b;border-radius:3.05px;"></div>
<svg style="left:1526px;top:54px" width="10" height="819" viewBox="0 0 10 819"><path d="M2.3 9.3 L5.05 4.4 L7.8 9.3Z" fill="#8b8b8b"/><path d="M2.3 811.2 L5.05 816 L7.8 811.2Z" fill="#505050"/></svg>
</body></html>
